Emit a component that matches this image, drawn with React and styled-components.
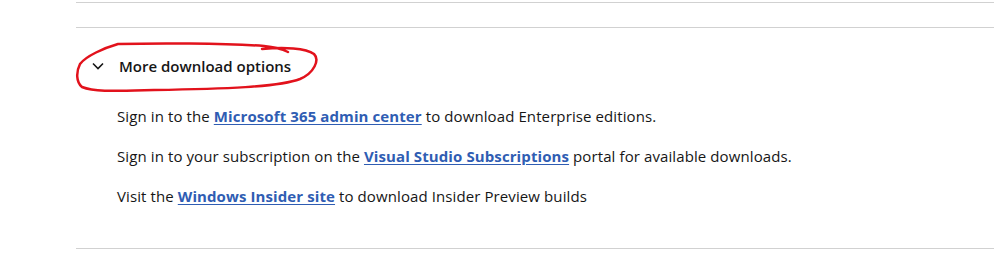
import React from "react";
import styled, { createGlobalStyle } from "styled-components";

const GlobalStyle = createGlobalStyle`
  body {
    margin: 0;
    background: #ffffff;
    font-family: "Open Sans", "Noto Sans", sans-serif;
    color: #161616;
  }
`;

const App = () => {
  return (
    <Page>
      <GlobalStyle />
      <Divider $top={2} />
      <Divider $top={24} />
      <Section>
        <Summary>
          <Chevron viewBox="0 0 12 8" aria-hidden="true">
            <path d="M1 1.5 L6 6.5 L11 1.5" />
          </Chevron>
          <SummaryText>More download options</SummaryText>
          {/* hand-drawn red mark around the heading */}
          <Scribble viewBox="0 0 250 56" aria-hidden="true">
            <path d="M188 9 C210 7 232 8 240 14 C246 20 240 33 226 39 C205 47 150 49 80 50 C40 51 20 52 8 47 C2 42 2 32 6 24 C12 16 30 8 44 4 C80 3 150 3 190 6 C200 7 208 9 214 12" />
          </Scribble>
        </Summary>
        <Lines>
          <Line>
            Sign in to the <Link href="#">Microsoft 365 admin center</Link> to
            download Enterprise editions.
          </Line>
          <Line>
            Sign in to your subscription on the{" "}
            <Link href="#">Visual Studio Subscriptions</Link> portal for
            available downloads.
          </Line>
          <Line>
            Visit the <Link href="#">Windows Insider site</Link> to download
            Insider Preview builds
          </Line>
        </Lines>
      </Section>
      <Divider $top={0} />
    </Page>
  );
};

export default App;

const Page = styled.div`
  padding-left: 76px;
  width: 918px;
`;

const Divider = styled.hr`
  margin: ${(p) => p.$top}px 0 0;
  border: 0;
  border-top: 1px solid #d1d1d1;
  height: 0;
`;

const Section = styled.section`
  padding: 27px 0 41px;
`;

const Summary = styled.div`
  position: relative;
  display: flex;
  align-items: center;
  height: 22px;
  padding-left: 16px;
`;

const Chevron = styled.svg`
  width: 12px;
  height: 8px;
  fill: none;
  stroke: #161616;
  stroke-width: 1.6;
  margin-right: 15px;
`;

const SummaryText = styled.span`
  font-size: 15px;
  font-weight: 600;
`;

const Scribble = styled.svg`
  position: absolute;
  left: -2px;
  top: -15px;
  width: 250px;
  height: 56px;
  fill: none;
  stroke: #e2121c;
  stroke-width: 2.5;
  stroke-linecap: round;
  stroke-linejoin: round;
  overflow: visible;
`;

const Lines = styled.div`
  display: flex;
  flex-direction: column;
  gap: 19px;
  padding-left: 41px;
  margin-top: 29px;
`;

const Line = styled.p`
  margin: 0;
  font-size: 15px;
  line-height: 21px;
  letter-spacing: 0.1px;
`;

const Link = styled.a`
  color: #2f5db3;
  font-weight: 700;
  text-decoration: underline;
  text-underline-offset: 2px;
`;
